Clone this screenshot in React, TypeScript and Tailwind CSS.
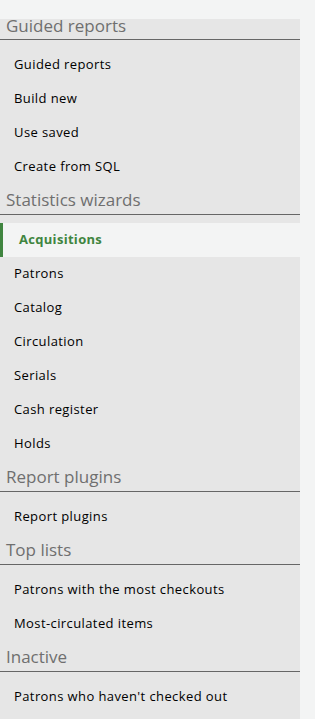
import React from 'react';

type Section = { title: string; items: string[] };

const SECTIONS: Section[] = [
  { title: 'Guided reports', items: ['Guided reports', 'Build new', 'Use saved', 'Create from SQL'] },
  {
    title: 'Statistics wizards',
    items: ['Acquisitions', 'Patrons', 'Catalog', 'Circulation', 'Serials', 'Cash register', 'Holds'],
  },
  { title: 'Report plugins', items: ['Report plugins'] },
  { title: 'Top lists', items: ['Patrons with the most checkouts', 'Most-circulated items'] },
  { title: 'Inactive', items: ["Patrons who haven't checked out"] },
];

const ACTIVE = 'Acquisitions';

const App: React.FC = () => {
  return (
    <div className="min-h-screen bg-[#f3f4f4] pt-[19px] font-['Open_Sans',sans-serif]">
      <aside className="w-[300px] bg-[#e6e6e6] pb-6">
        {SECTIONS.map((section, i) => (
          <div key={section.title}>
            <h3
              className={`border-b border-[#666666] pl-[6px] text-[17px] font-normal text-[#6f6f6f] ${
                i === 0 ? 'pb-[7px] leading-[13px]' : 'pt-[6px] pb-[4px] leading-[20px]'
              }`}
            >
              {section.title}
            </h3>
            <ul className="pt-[8px]">
              {section.items.map(item =>
                item === ACTIVE && section.title === 'Statistics wizards' ? (
                  <li
                    key={item}
                    className="flex h-[34px] items-center border-l-[3px] border-[#408540] bg-[#f3f4f4] pl-[16px] text-[13px] font-bold tracking-[0.3px] text-[#408540]"
                  >
                    {item}
                  </li>
                ) : (
                  <li key={item} className="flex h-[34px] items-center pl-[14px] text-[13px] tracking-[0.4px] text-black">
                    {item}
                  </li>
                )
              )}
            </ul>
          </div>
        ))}
      </aside>
    </div>
  );
};

export default App;
